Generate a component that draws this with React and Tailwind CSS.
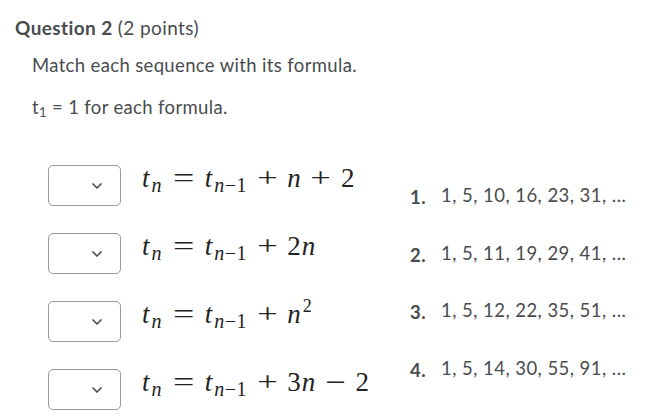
import { ChevronDown } from "lucide-react";

const FORMULAS = [
  { id: 1, rest: [["+", "n"], ["+", "2"]] },
  { id: 2, rest: [["+", "2n"]] },
  { id: 3, rest: [["+", "n2"]] },
  { id: 4, rest: [["+", "3n"], ["\u2212", "2"]] },
];

const SEQUENCES = [
  "1, 5, 10, 16, 23, 31, ...",
  "1, 5, 11, 19, 29, 41, ...",
  "1, 5, 12, 22, 35, 51, ...",
  "1, 5, 14, 30, 55, 91, ...",
];

function Op({ children, wide }) {
  // times' operators are narrow next to computer modern, so stretch them a bit
  return (
    <span className={wide ? "inline-block mx-[14px] scale-x-[1.4]" : "inline-block mx-[12.5px] scale-x-[1.35]"}>
      {children}
    </span>
  );
}

function Term({ value }) {
  if (value === "n2") {
    return (
      <span>
        <i>n</i>
        <span className="text-[18px] relative -top-[11px] ml-[2px]">2</span>
      </span>
    );
  }
  if (value === "2n" || value === "3n") {
    return (
      <span>
        {value[0]}
        <i className="ml-[1px]">n</i>
      </span>
    );
  }
  if (value === "n") return <i>n</i>;
  return <span>{value}</span>;
}

function Formula({ rest }) {
  return (
    <div className="relative -top-[7px] font-['Liberation_Serif',serif] text-[27px] leading-none text-[#222] whitespace-nowrap">
      <i>t</i>
      <span className="text-[20px] italic relative top-[5px] ml-[2px]">n</span>
      <Op wide>=</Op>
      <i>t</i>
      <span className="text-[20px] relative top-[5px] ml-[2px] tracking-[0.5px]">
        <i>n</i>
        {"\u2212"}1
      </span>
      {rest.map(([op, val], i) => (
        <span key={i}>
          <Op>{op}</Op>
          <Term value={val} />
        </span>
      ))}
    </div>
  );
}

function Dropdown() {
  return (
    <div className="w-[73px] h-[41px] shrink-0 rounded-[5px] border border-[#9a9a9a] bg-white flex items-center justify-end pr-[15px]">
      <ChevronDown size={16} strokeWidth={2.5} className="text-[#4a4a4a]" />
    </div>
  );
}

export default function App() {
  return (
    <div className="w-[662px] h-[416px] bg-white font-['Lato',sans-serif] text-[#494c4e] overflow-hidden">
      <h2 className="pl-[15px] pt-[14px] text-[19px] leading-[27px] tracking-[0.4px]">
        <span className="font-bold">Question 2</span> (2 points)
      </h2>
      <div className="pl-[32px] text-[18.5px] leading-[26px] tracking-[0.35px]">
        <p className="mt-[11px]">Match each sequence with its formula.</p>
        <p className="mt-[16px]">
          t<sub className="text-[13px]">1</sub> = 1 for each formula.
        </p>
      </div>

      <div className="flex items-center mt-[45px]">
        <div className="flex flex-col gap-[27px] pl-[48px] w-[410px]">
          {FORMULAS.map((f) => (
            <div key={f.id} className="flex items-center gap-[21px]">
              <Dropdown />
              <Formula rest={f.rest} />
            </div>
          ))}
        </div>
        <ol className="flex flex-col gap-[31.5px] text-[18.5px] leading-[26px] tracking-[0.45px] mt-[-12px]">
          {SEQUENCES.map((s, i) => (
            <li key={i} className="flex">
              <span className="font-bold w-[31px] relative top-[2px]">{i + 1}.</span>
              <span>{s}</span>
            </li>
          ))}
        </ol>
      </div>
    </div>
  );
}
